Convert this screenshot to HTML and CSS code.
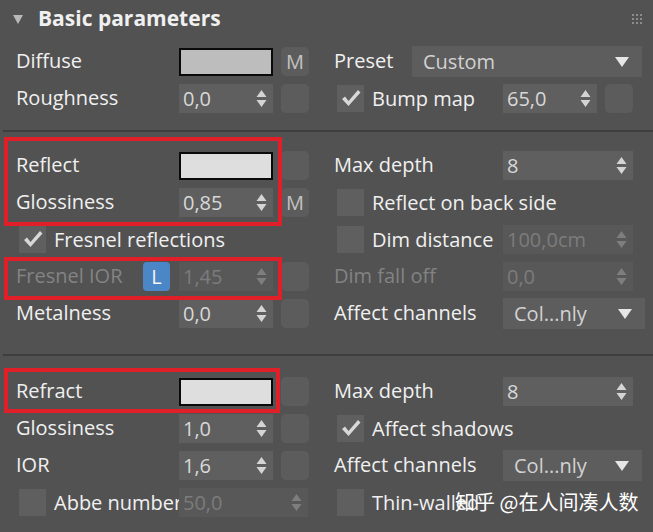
FILE: index.html
```html
<!DOCTYPE html>
<html>
<head>
<meta charset="utf-8">
<link rel="stylesheet" href="styles.css">
</head>
<body>
<div class="panel">
  <div class="header">
    <span class="tri"></span>
    <span class="title">Basic parameters</span>
    <svg class="grip" width="10" height="10" viewBox="0 0 10 10"><g fill="#8c8c8c"><rect x="0" y="0" width="2" height="2"/><rect x="4" y="0" width="2" height="2"/><rect x="8" y="0" width="2" height="2"/><rect x="0" y="4" width="2" height="2"/><rect x="4" y="4" width="2" height="2"/><rect x="8" y="4" width="2" height="2"/><rect x="0" y="8" width="2" height="2"/><rect x="4" y="8" width="2" height="2"/><rect x="8" y="8" width="2" height="2"/></g></svg>
  </div>

  <div class="section s1">
    <div class="row">
      <div class="half left">
        <span class="label">Diffuse</span>
        <span class="swatch sw-diffuse"></span>
        <span class="btn">M</span>
      </div>
      <div class="half right">
        <span class="label short">Preset</span>
        <span class="dropdown dd-preset"><span>Custom</span><svg class="dd-arr" width="14" height="10" viewBox="0 0 14 10"><path d="M0 0H14L7 10Z"/></svg></span>
      </div>
    </div>
    <div class="row">
      <div class="half left">
        <span class="label">Roughness</span>
        <span class="spin"><span>0,0</span><svg class="arr" width="11" height="19" viewBox="0 0 11 19"><path d="M5.5 1L10.5 8H0.5Z M0.5 11H10.5L5.5 18Z"/></svg></span>
        <span class="btn"></span>
      </div>
      <div class="half right">
        <span class="opt fixed"><span class="check"><svg width="27" height="27" viewBox="0 0 27 27"><path class="tick" d="M5 14L8 11.5L11.5 16L21 5L23.5 7.5L11.5 21Z"/></svg></span>Bump map</span>
        <span class="spin"><span>65,0</span><svg class="arr" width="11" height="19" viewBox="0 0 11 19"><path d="M5.5 1L10.5 8H0.5Z M0.5 11H10.5L5.5 18Z"/></svg></span>
        <span class="btn"></span>
      </div>
    </div>
  </div>

  <div class="sep"></div>

  <div class="section s2">
    <div class="row">
      <div class="half left">
        <span class="label">Reflect</span>
        <span class="swatch sw-light"></span>
        <span class="btn"></span>
      </div>
      <div class="half right">
        <span class="label">Max depth</span>
        <span class="spin wide"><span>8</span><svg class="arr" width="11" height="19" viewBox="0 0 11 19"><path d="M5.5 1L10.5 8H0.5Z M0.5 11H10.5L5.5 18Z"/></svg></span>
      </div>
    </div>
    <div class="row">
      <div class="half left">
        <span class="label">Glossiness</span>
        <span class="spin"><span>0,85</span><svg class="arr" width="11" height="19" viewBox="0 0 11 19"><path d="M5.5 1L10.5 8H0.5Z M0.5 11H10.5L5.5 18Z"/></svg></span>
        <span class="btn">M</span>
      </div>
      <div class="half right">
        <span class="opt"><span class="check"></span>Reflect on back side</span>
      </div>
    </div>
    <div class="row">
      <div class="half left">
        <span class="opt"><span class="check"><svg width="27" height="27" viewBox="0 0 27 27"><path class="tick" d="M5 14L8 11.5L11.5 16L21 5L23.5 7.5L11.5 21Z"/></svg></span>Fresnel reflections</span>
      </div>
      <div class="half right">
        <span class="opt fixed"><span class="check"></span>Dim distance</span>
        <span class="spin wide off"><span>100,0cm</span><svg class="arr" width="11" height="19" viewBox="0 0 11 19"><path d="M5.5 1L10.5 8H0.5Z M0.5 11H10.5L5.5 18Z"/></svg></span>
      </div>
    </div>
    <div class="row">
      <div class="half left">
        <span class="label dim with-badge">Fresnel IOR<span class="badge">L</span></span>
        <span class="spin off"><span>1,45</span><svg class="arr" width="11" height="19" viewBox="0 0 11 19"><path d="M5.5 1L10.5 8H0.5Z M0.5 11H10.5L5.5 18Z"/></svg></span>
        <span class="btn"></span>
      </div>
      <div class="half right">
        <span class="label dim">Dim fall off</span>
        <span class="spin wide off"><span>0,0</span><svg class="arr" width="11" height="19" viewBox="0 0 11 19"><path d="M5.5 1L10.5 8H0.5Z M0.5 11H10.5L5.5 18Z"/></svg></span>
      </div>
    </div>
    <div class="row">
      <div class="half left">
        <span class="label">Metalness</span>
        <span class="spin"><span>0,0</span><svg class="arr" width="11" height="19" viewBox="0 0 11 19"><path d="M5.5 1L10.5 8H0.5Z M0.5 11H10.5L5.5 18Z"/></svg></span>
        <span class="btn"></span>
      </div>
      <div class="half right">
        <span class="label">Affect channels</span>
        <span class="dropdown dd-ch1"><span>Col...nly</span><svg class="dd-arr" width="14" height="10" viewBox="0 0 14 10"><path d="M0 0H14L7 10Z"/></svg></span>
      </div>
    </div>
  </div>

  <div class="sep"></div>

  <div class="section s3">
    <div class="row">
      <div class="half left">
        <span class="label">Refract</span>
        <span class="swatch sw-light"></span>
        <span class="btn"></span>
      </div>
      <div class="half right">
        <span class="label">Max depth</span>
        <span class="spin wide"><span>8</span><svg class="arr" width="11" height="19" viewBox="0 0 11 19"><path d="M5.5 1L10.5 8H0.5Z M0.5 11H10.5L5.5 18Z"/></svg></span>
      </div>
    </div>
    <div class="row">
      <div class="half left">
        <span class="label">Glossiness</span>
        <span class="spin"><span>1,0</span><svg class="arr" width="11" height="19" viewBox="0 0 11 19"><path d="M5.5 1L10.5 8H0.5Z M0.5 11H10.5L5.5 18Z"/></svg></span>
        <span class="btn"></span>
      </div>
      <div class="half right">
        <span class="opt"><span class="check"><svg width="27" height="27" viewBox="0 0 27 27"><path class="tick" d="M5 14L8 11.5L11.5 16L21 5L23.5 7.5L11.5 21Z"/></svg></span>Affect shadows</span>
      </div>
    </div>
    <div class="row">
      <div class="half left">
        <span class="label">IOR</span>
        <span class="spin"><span>1,6</span><svg class="arr" width="11" height="19" viewBox="0 0 11 19"><path d="M5.5 1L10.5 8H0.5Z M0.5 11H10.5L5.5 18Z"/></svg></span>
        <span class="btn"></span>
      </div>
      <div class="half right">
        <span class="label">Affect channels</span>
        <span class="dropdown dd-ch2"><span>Col...nly</span><svg class="dd-arr" width="14" height="10" viewBox="0 0 14 10"><path d="M0 0H14L7 10Z"/></svg></span>
      </div>
    </div>
    <div class="row">
      <div class="half left">
        <span class="opt fixed-left"><span class="check"></span>Abbe number</span>
        <span class="spin xwide off"><span>50,0</span><svg class="arr" width="11" height="19" viewBox="0 0 11 19"><path d="M5.5 1L10.5 8H0.5Z M0.5 11H10.5L5.5 18Z"/></svg></span>
      </div>
      <div class="half right">
        <span class="opt"><span class="check"></span>Thin-walled</span>
      </div>
    </div>
  </div>

  <div class="annot a1"></div>
  <div class="annot a2"></div>
  <div class="annot a3"></div>
  <div class="watermark">知乎 @在人间凑人数</div>
</div>
</body>
</html>
```

FILE: styles.css
```css
* {
  box-sizing: border-box;
}

body {
  margin: 0;
  background: #525252;
  font-family: "Open Sans", "Noto Sans", sans-serif;
  font-size: 20px;
  color: #f0f0f0;
}

.panel {
  position: relative;
  width: 653px;
  height: 532px;
  overflow: hidden;
  background: #525252;
}

.header {
  height: 38px;
  margin-bottom: 5px;
  display: flex;
  align-items: center;
  padding-left: 13px;
}

.tri {
  width: 0;
  height: 0;
  border-left: 5.5px solid transparent;
  border-right: 5.5px solid transparent;
  border-top: 9px solid #b8b8b8;
}

.title {
  font-weight: 700;
  font-size: 21px;
  margin-left: 15px;
  margin-top: -2px;
}

.grip {
  margin-left: auto;
  margin-right: 11px;
  margin-top: -1px;
}

.s1 {
  padding-bottom: 13px;
}

.s2 {
  padding: 15px 0 22px;
}

.s3 {
  padding-top: 17px;
}

.sep {
  height: 2px;
  margin-left: 3px;
  background: #3e3e3e;
}

.row {
  display: flex;
  height: 37px;
  align-items: center;
}

.half {
  display: flex;
  align-items: center;
}

.left {
  width: 334px;
  padding-left: 16px;
}

.right {
  flex: 1;
}

.label {
  flex: none;
  width: 163px;
  white-space: nowrap;
  margin-top: -2px;
}

.right .label {
  width: 169px;
}

.right .label.short {
  width: 78px;
}

.dim {
  color: #838383;
}

.with-badge {
  display: flex;
  align-items: center;
}

.badge {
  margin-left: auto;
  margin-right: 9px;
  margin-top: 2px;
  width: 27px;
  height: 29px;
  border-radius: 4px;
  background: #4b86c6;
  color: #f4f4f4;
  display: flex;
  align-items: center;
  justify-content: center;
}

.opt {
  display: flex;
  align-items: center;
  gap: 8px;
  padding-left: 3px;
  white-space: nowrap;
}

.opt.fixed {
  width: 169px;
  flex: none;
}

.opt.fixed-left {
  width: 163px;
  flex: none;
  overflow: hidden;
}

.check {
  flex: none;
  width: 27px;
  height: 27px;
  background: #5f5f5f;
  display: flex;
}

.tick {
  fill: #d8d8d8;
}

.spin {
  flex: none;
  width: 94px;
  height: 29px;
  background: #5f5f5f;
  color: #d8d8d8;
  display: flex;
  align-items: center;
  justify-content: space-between;
  padding: 0 6px 0 4px;
}

.spin.wide {
  width: 130px;
}

.spin.xwide {
  width: 129px;
}

.spin.off {
  background: #585858;
  color: #7c7c7c;
}

.arr {
  fill: #d4d4d4;
}

.spin.off .arr {
  fill: #7e7e7e;
}

.btn {
  flex: none;
  width: 28px;
  height: 29px;
  margin-left: 8px;
  border-radius: 5px;
  background: #5c5c5c;
  color: #c2c2c2;
  display: flex;
  align-items: center;
  justify-content: center;
}

.swatch {
  flex: none;
  width: 94px;
  height: 28px;
  border: 2px solid #0a0a0a;
}

.sw-diffuse {
  background: #bdbdbd;
}

.sw-light {
  background: #dedede;
}

.dropdown {
  flex: none;
  height: 31px;
  background: #5d5d5d;
  color: #d2d2d2;
  display: flex;
  align-items: center;
  justify-content: space-between;
  padding: 0 13px 0 11px;
}

.dd-arr {
  fill: #e6e6e6;
}

.dd-preset {
  width: 230px;
}

.dd-ch1 {
  width: 142px;
}

.dd-ch2 {
  width: 139px;
}

.annot {
  position: absolute;
  border: 4px solid #e01f28;
}

.a1 {
  left: 4px;
  top: 137px;
  width: 278px;
  height: 89px;
}

.a2 {
  left: 4px;
  top: 257px;
  width: 278px;
  height: 43px;
}

.a3 {
  left: 4px;
  top: 368px;
  width: 276px;
  height: 45px;
}

.watermark {
  position: absolute;
  left: 455px;
  top: 487px;
  font-family: "Noto Sans CJK SC", sans-serif;
  font-size: 20px;
  color: #ffffff;
  white-space: nowrap;
}
```
